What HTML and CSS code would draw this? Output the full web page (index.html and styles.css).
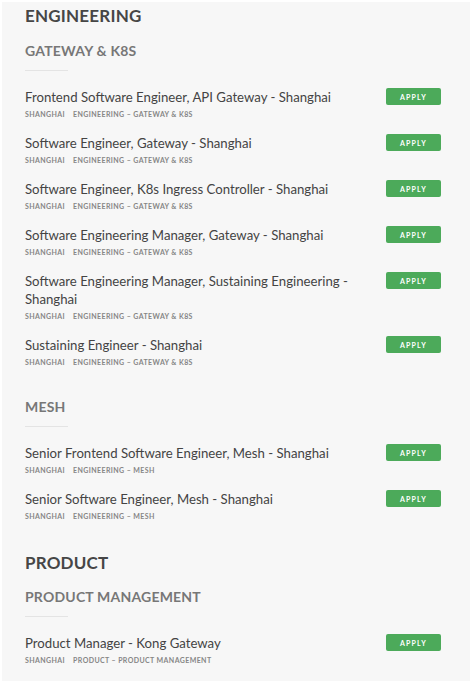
FILE: index.html
```html
<!DOCTYPE html>
<html lang="en">
<head>
<meta charset="utf-8">
<title>Jobs</title>
<link rel="stylesheet" href="styles.css">
</head>
<body>
<main class="panel">
  <section class="dept">
    <h1 class="dept-title">ENGINEERING</h1>
    <div class="team">
      <h2 class="team-title">GATEWAY &amp; K8S</h2>
      <div class="divider"></div>
      <ul class="jobs">
        <li class="job"><div class="job-info"><div class="job-title">Frontend Software Engineer, API Gateway - Shanghai</div><div class="job-meta"><span>SHANGHAI</span><span>ENGINEERING – GATEWAY &amp; K8S</span></div></div><a class="apply" href="#">APPLY</a></li>
        <li class="job"><div class="job-info"><div class="job-title">Software Engineer, Gateway - Shanghai</div><div class="job-meta"><span>SHANGHAI</span><span>ENGINEERING – GATEWAY &amp; K8S</span></div></div><a class="apply" href="#">APPLY</a></li>
        <li class="job"><div class="job-info"><div class="job-title">Software Engineer, K8s Ingress Controller - Shanghai</div><div class="job-meta"><span>SHANGHAI</span><span>ENGINEERING – GATEWAY &amp; K8S</span></div></div><a class="apply" href="#">APPLY</a></li>
        <li class="job"><div class="job-info"><div class="job-title">Software Engineering Manager, Gateway - Shanghai</div><div class="job-meta"><span>SHANGHAI</span><span>ENGINEERING – GATEWAY &amp; K8S</span></div></div><a class="apply" href="#">APPLY</a></li>
        <li class="job"><div class="job-info"><div class="job-title">Software Engineering Manager, Sustaining Engineering - Shanghai</div><div class="job-meta"><span>SHANGHAI</span><span>ENGINEERING – GATEWAY &amp; K8S</span></div></div><a class="apply" href="#">APPLY</a></li>
        <li class="job"><div class="job-info"><div class="job-title">Sustaining Engineer - Shanghai</div><div class="job-meta"><span>SHANGHAI</span><span>ENGINEERING – GATEWAY &amp; K8S</span></div></div><a class="apply" href="#">APPLY</a></li>
      </ul>
    </div>
    <div class="team">
      <h2 class="team-title">MESH</h2>
      <div class="divider"></div>
      <ul class="jobs">
        <li class="job"><div class="job-info"><div class="job-title">Senior Frontend Software Engineer, Mesh - Shanghai</div><div class="job-meta"><span>SHANGHAI</span><span>ENGINEERING – MESH</span></div></div><a class="apply" href="#">APPLY</a></li>
        <li class="job"><div class="job-info"><div class="job-title">Senior Software Engineer, Mesh - Shanghai</div><div class="job-meta"><span>SHANGHAI</span><span>ENGINEERING – MESH</span></div></div><a class="apply" href="#">APPLY</a></li>
      </ul>
    </div>
  </section>
  <section class="dept">
    <h1 class="dept-title">PRODUCT</h1>
    <div class="team">
      <h2 class="team-title">PRODUCT MANAGEMENT</h2>
      <div class="divider"></div>
      <ul class="jobs">
        <li class="job"><div class="job-info"><div class="job-title">Product Manager - Kong Gateway</div><div class="job-meta"><span>SHANGHAI</span><span>PRODUCT – PRODUCT MANAGEMENT</span></div></div><a class="apply" href="#">APPLY</a></li>
      </ul>
    </div>
  </section>
</main>
</body>
</html>
```
FILE: styles.css
```css
html, body {
  margin: 0;
  padding: 0;
  background: #ffffff;
}
body {
  padding: 2px 4px 3px 2px;
  font-family: Lato, "Open Sans", Arial, sans-serif;
}
.panel {
  background: #f7f7f7;
  padding: 3px 29px 4px 23px;
  min-height: 669px;
}
.dept-title {
  margin: 0;
  font-size: 17px;
  line-height: 22px;
  font-weight: 700;
  color: #464646;
  letter-spacing: 0.2px;
}
.dept + .dept .dept-title {
  margin-top: 31px;
}
.team-title {
  margin: 15px 0 0;
  font-size: 14px;
  line-height: 18px;
  font-weight: 700;
  color: #777777;
  letter-spacing: 0.2px;
}
.dept + .dept .team-title {
  margin-top: 14px;
}
.team + .team .team-title {
  margin-top: 31px;
}
.divider {
  width: 43px;
  height: 1px;
  background: #e4e4e4;
  margin-top: 10px;
}
.jobs {
  list-style: none;
  margin: 17px 0 0;
  padding: 0;
}
.job {
  display: flex;
  align-items: flex-start;
  gap: 24px;
  margin-bottom: 15px;
}
.job-info {
  flex: 1;
  min-width: 0;
}
.job-title {
  font-size: 13.2px;
  line-height: 18px;
  color: #444444;
}
.job-meta {
  margin-top: 3px;
  display: flex;
  gap: 8px;
  font-size: 7px;
  line-height: 10px;
  font-weight: 700;
  letter-spacing: 0.4px;
  color: #868686;
}
.apply {
  flex: none;
  width: 55px;
  height: 17px;
  display: flex;
  align-items: center;
  justify-content: center;
  background: #4caa5a;
  color: #ffffff;
  border-radius: 2px;
  font-size: 7px;
  font-weight: 700;
  letter-spacing: 1.2px;
  text-decoration: none;
}
```
